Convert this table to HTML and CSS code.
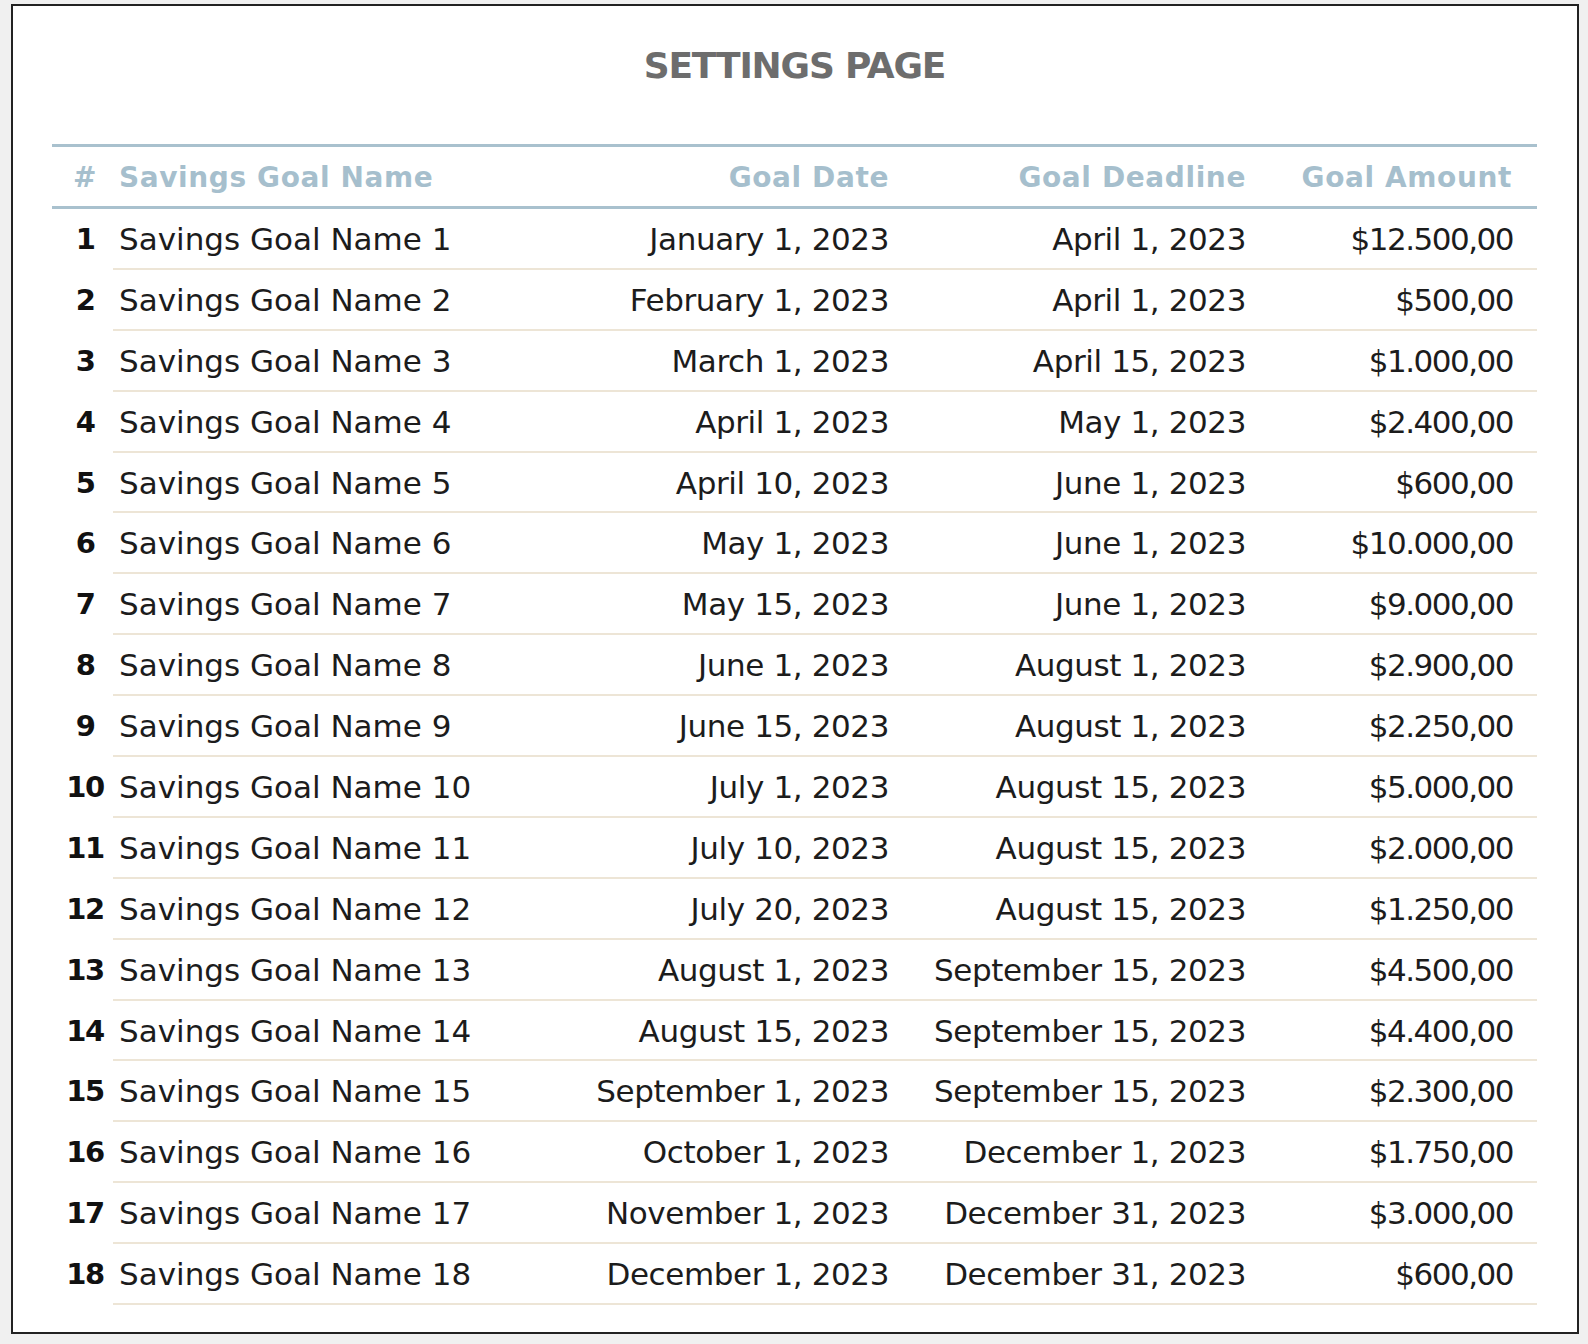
FILE: index.html
```html
<!DOCTYPE html>
<html lang="en">
<head>
<meta charset="utf-8">
<title>Settings Page</title>
<link rel="stylesheet" href="styles.css">
</head>
<body>
<div class="frame">
  <h1 class="title">SETTINGS PAGE</h1>
  <div class="table">
    <div class="row head">
      <div class="cell num">#</div>
      <div class="cell name">Savings Goal Name</div>
      <div class="cell r">Goal Date</div>
      <div class="cell r">Goal Deadline</div>
      <div class="cell r last">Goal Amount</div>
    </div>
    <div class="row"><div class="cell num">1</div><div class="cell name">Savings Goal Name 1</div><div class="cell r">January 1, 2023</div><div class="cell r">April 1, 2023</div><div class="cell r last">$12.500,00</div></div>
    <div class="row"><div class="cell num">2</div><div class="cell name">Savings Goal Name 2</div><div class="cell r">February 1, 2023</div><div class="cell r">April 1, 2023</div><div class="cell r last">$500,00</div></div>
    <div class="row"><div class="cell num">3</div><div class="cell name">Savings Goal Name 3</div><div class="cell r">March 1, 2023</div><div class="cell r">April 15, 2023</div><div class="cell r last">$1.000,00</div></div>
    <div class="row"><div class="cell num">4</div><div class="cell name">Savings Goal Name 4</div><div class="cell r">April 1, 2023</div><div class="cell r">May 1, 2023</div><div class="cell r last">$2.400,00</div></div>
    <div class="row"><div class="cell num">5</div><div class="cell name">Savings Goal Name 5</div><div class="cell r">April 10, 2023</div><div class="cell r">June 1, 2023</div><div class="cell r last">$600,00</div></div>
    <div class="row"><div class="cell num">6</div><div class="cell name">Savings Goal Name 6</div><div class="cell r">May 1, 2023</div><div class="cell r">June 1, 2023</div><div class="cell r last">$10.000,00</div></div>
    <div class="row"><div class="cell num">7</div><div class="cell name">Savings Goal Name 7</div><div class="cell r">May 15, 2023</div><div class="cell r">June 1, 2023</div><div class="cell r last">$9.000,00</div></div>
    <div class="row"><div class="cell num">8</div><div class="cell name">Savings Goal Name 8</div><div class="cell r">June 1, 2023</div><div class="cell r">August 1, 2023</div><div class="cell r last">$2.900,00</div></div>
    <div class="row"><div class="cell num">9</div><div class="cell name">Savings Goal Name 9</div><div class="cell r">June 15, 2023</div><div class="cell r">August 1, 2023</div><div class="cell r last">$2.250,00</div></div>
    <div class="row"><div class="cell num">10</div><div class="cell name">Savings Goal Name 10</div><div class="cell r">July 1, 2023</div><div class="cell r">August 15, 2023</div><div class="cell r last">$5.000,00</div></div>
    <div class="row"><div class="cell num">11</div><div class="cell name">Savings Goal Name 11</div><div class="cell r">July 10, 2023</div><div class="cell r">August 15, 2023</div><div class="cell r last">$2.000,00</div></div>
    <div class="row"><div class="cell num">12</div><div class="cell name">Savings Goal Name 12</div><div class="cell r">July 20, 2023</div><div class="cell r">August 15, 2023</div><div class="cell r last">$1.250,00</div></div>
    <div class="row"><div class="cell num">13</div><div class="cell name">Savings Goal Name 13</div><div class="cell r">August 1, 2023</div><div class="cell r">September 15, 2023</div><div class="cell r last">$4.500,00</div></div>
    <div class="row"><div class="cell num">14</div><div class="cell name">Savings Goal Name 14</div><div class="cell r">August 15, 2023</div><div class="cell r">September 15, 2023</div><div class="cell r last">$4.400,00</div></div>
    <div class="row"><div class="cell num">15</div><div class="cell name">Savings Goal Name 15</div><div class="cell r">September 1, 2023</div><div class="cell r">September 15, 2023</div><div class="cell r last">$2.300,00</div></div>
    <div class="row"><div class="cell num">16</div><div class="cell name">Savings Goal Name 16</div><div class="cell r">October 1, 2023</div><div class="cell r">December 1, 2023</div><div class="cell r last">$1.750,00</div></div>
    <div class="row"><div class="cell num">17</div><div class="cell name">Savings Goal Name 17</div><div class="cell r">November 1, 2023</div><div class="cell r">December 31, 2023</div><div class="cell r last">$3.000,00</div></div>
    <div class="row"><div class="cell num">18</div><div class="cell name">Savings Goal Name 18</div><div class="cell r">December 1, 2023</div><div class="cell r">December 31, 2023</div><div class="cell r last">$600,00</div></div>
  </div>
</div>
</body>
</html>
```

FILE: styles.css
```css
html, body {
  margin: 0;
  padding: 0;
}
body {
  background: #f0f0f0;
  font-family: "DejaVu Sans", "Liberation Sans", sans-serif;
  color: #1c1c1c;
}
.frame {
  box-sizing: border-box;
  margin: 4px 0 0 11px;
  width: 1568px;
  height: 1330px;
  border: 2px solid #222;
  background: #fff;
  padding: 40px 40px 0 39px;
}
.title {
  margin: 0 0 58px 0;
  text-align: center;
  font-size: 36px;
  line-height: 40px;
  font-weight: bold;
  color: #6d6d6d;
  letter-spacing: -1.2px;
}
.table {
  display: flex;
  flex-direction: column;
}
.row {
  display: grid;
  grid-template-columns: 61px 476px 300px 357px 291px;
  height: 60.9px;
  font-size: 31px;
}
.cell {
  display: flex;
  align-items: center;
  white-space: nowrap;
  border-bottom: 2px solid #ede5d6;
  box-sizing: border-box;
  padding-top: 1px;
}
.cell.num {
  justify-content: center;
  font-weight: bold;
  font-size: 29px;
  letter-spacing: -1.5px;
  padding-left: 5px;
  border-bottom-color: transparent;
  color: #111;
}
.cell.name {
  padding-left: 6px;
}
.cell.r {
  justify-content: flex-end;
  letter-spacing: -0.4px;
}
.cell.last {
  padding-right: 24px;
  letter-spacing: -1.5px;
}
.row.head {
  height: 65px;
  border-top: 3px solid #a9c1ce;
  border-bottom: 3px solid #a9c1ce;
  box-sizing: border-box;
  font-size: 28px;
  font-weight: bold;
  color: #a6bfcd;
}
.row.head .cell {
  border-bottom: none;
  padding-top: 2px;
  letter-spacing: 0.6px;
}
.row.head .cell.last {
  padding-right: 25px;
}
.row.head .cell.num {
  color: #a6bfcd;
  font-size: 28px;
}
```
